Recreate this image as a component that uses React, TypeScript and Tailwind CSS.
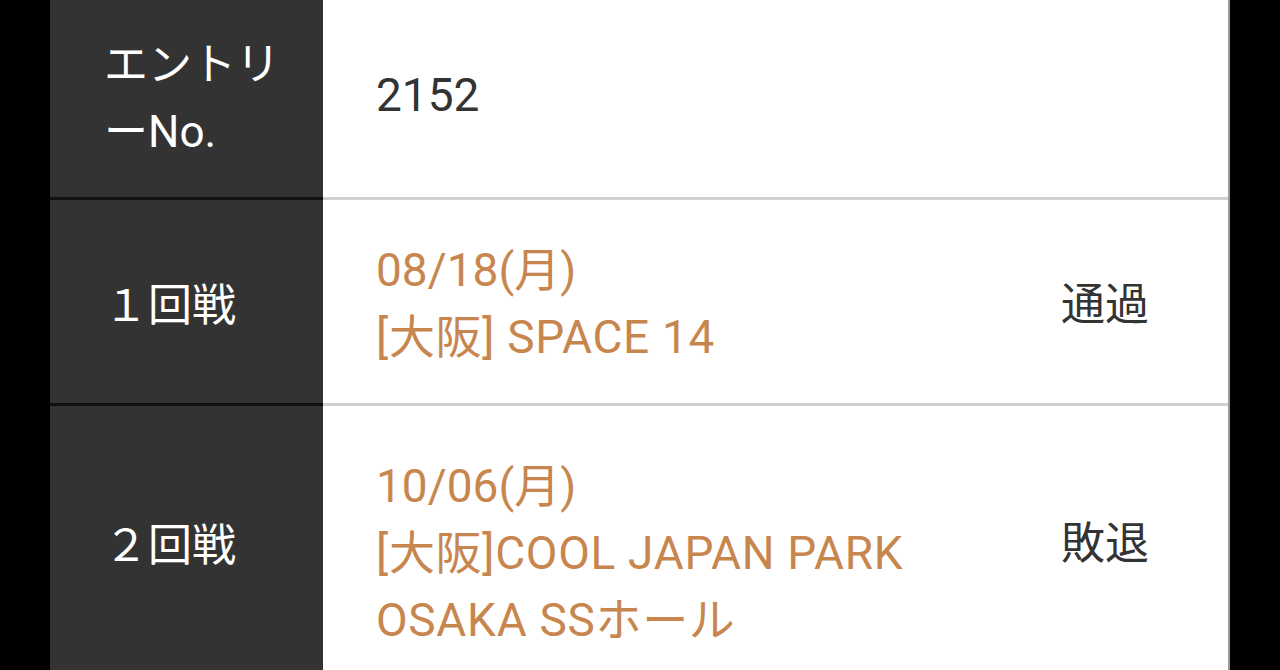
const font = { fontFamily: '"Roboto", "Noto Sans CJK JP", sans-serif' };

type Row = {
  label: string;
  labelPt: string;
  rowH: string;
  valuePt: string;
  lines: string[];
  accent: boolean;
  result?: string;
  resultPt?: string;
};

const rows: Row[] = [
  {
    label: 'エントリーNo.',
    labelPt: 'pt-[32px]',
    rowH: 'h-[197px]',
    valuePt: 'pt-[62px]',
    lines: ['2152'],
    accent: false,
  },
  {
    label: '１回戦',
    labelPt: 'pt-[73px]',
    rowH: 'h-[206px]',
    valuePt: 'pt-[37px]',
    lines: ['08/18(月)', '[大阪] SPACE 14'],
    accent: true,
    result: '通過',
    resultPt: 'pt-[72px]',
  },
  {
    label: '２回戦',
    labelPt: 'pt-[107px]',
    rowH: 'h-[285px]',
    valuePt: 'pt-[47px]',
    lines: ['10/06(月)', '[大阪]COOL JAPAN PARK', 'OSAKA SSホール'],
    accent: true,
    result: '敗退',
    resultPt: 'pt-[105px]',
  },
];

export default function App() {
  return (
    <div className="h-[670px] w-[1280px] overflow-hidden bg-black" style={font}>
      <div className="ml-[50px] flex w-[1180px] flex-col border-r-2 border-[#9a9a9a] text-[46px] leading-[67px]">
        {rows.map((row, i) => (
          <div key={row.label} className={`flex shrink-0 ${row.rowH}`}>
            <div
              className={`w-[273px] shrink-0 bg-[#333333] pl-[54px] pr-[4px] text-[44px] text-white ${row.labelPt} ${
                i > 0 ? 'border-t-[3px] border-[#111111]' : ''
              }`}
            >
              {row.label}
            </div>
            <div
              className={`flex flex-1 bg-white ${i > 0 ? 'border-t-[3px] border-[#d0d0d0]' : ''}`}
            >
              <div
                className={`flex-1 pl-[53px] ${row.valuePt} ${
                  row.accent ? 'text-[#c8864f]' : 'text-[#333333]'
                }`}
              >
                {row.lines.map((line, j) => (
                  <div key={line} className={`whitespace-nowrap ${j > 0 ? 'tracking-[0.7px]' : ''}`}>
                    {line}
                  </div>
                ))}
              </div>
              {row.result && (
                <div
                  className={`w-[246px] shrink-0 text-center text-[44px] text-[#333333] ${row.resultPt}`}
                >
                  {row.result}
                </div>
              )}
            </div>
          </div>
        ))}
      </div>
    </div>
  );
}
